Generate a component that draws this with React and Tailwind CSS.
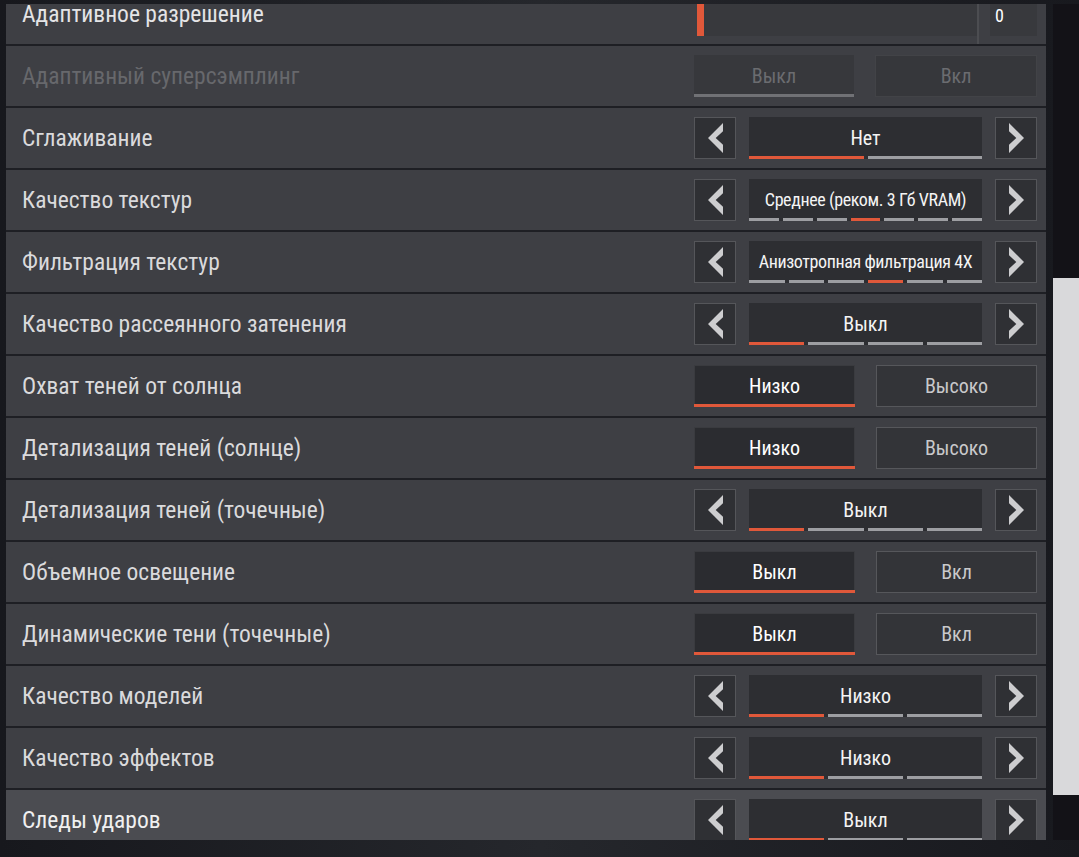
const rows = [
  { label: 'Адаптивное разрешение', type: 'slider', value: '0' },
  { label: 'Адаптивный суперсэмплинг', type: 'toggle', options: ['Выкл', 'Вкл'], disabled: true },
  { label: 'Сглаживание', type: 'cycle', value: 'Нет', segs: 2, active: 0 },
  { label: 'Качество текстур', type: 'cycle', value: 'Среднее (реком. 3 Гб VRAM)', segs: 7, active: 3 },
  { label: 'Фильтрация текстур', type: 'cycle', value: 'Анизотропная фильтрация 4X', segs: 6, active: 3 },
  { label: 'Качество рассеянного затенения', type: 'cycle', value: 'Выкл', segs: 4, active: 0 },
  { label: 'Охват теней от солнца', type: 'toggle', options: ['Низко', 'Высоко'] },
  { label: 'Детализация теней (солнце)', type: 'toggle', options: ['Низко', 'Высоко'] },
  { label: 'Детализация теней (точечные)', type: 'cycle', value: 'Выкл', segs: 4, active: 0 },
  { label: 'Объемное освещение', type: 'toggle', options: ['Выкл', 'Вкл'] },
  { label: 'Динамические тени (точечные)', type: 'toggle', options: ['Выкл', 'Вкл'] },
  { label: 'Качество моделей', type: 'cycle', value: 'Низко', segs: 3, active: 0 },
  { label: 'Качество эффектов', type: 'cycle', value: 'Низко', segs: 3, active: 0 },
  { label: 'Следы ударов', type: 'cycle', value: 'Выкл', segs: 3, active: 0, hover: true },
]

function Chevron({ right }) {
  return (
    <svg width="15" height="30" viewBox="0 0 15 30" className={right ? 'rotate-180' : ''}>
      <polygon points="15,0 15,8.3 7.7,15 15,21.7 15,30 0,15" fill="#cdcdcf" />
    </svg>
  )
}

function ArrowButton({ right }) {
  return (
    <div className="w-[42px] h-[42px] shrink-0 flex items-center justify-center bg-[#2f3034] border border-[#55565a]">
      <Chevron right={right} />
    </div>
  )
}

function Cycle({ row }) {
  const long = row.value.length > 12
  return (
    <div className="flex items-center gap-[13px] w-[343px]">
      <ArrowButton />
      <div className="flex-1 h-[42px] flex flex-col bg-[#2d2e32]">
        <div
          className={`flex-1 flex items-center justify-center pt-[2px] text-[#f4f4f4] ${
            long ? 'text-[18px] tracking-[-0.4px]' : 'text-[20px]'
          }`}
        >
          {row.value}
        </div>
        <div className="flex gap-[4px] h-[3px]">
          {Array.from({ length: row.segs }).map((_, i) => (
            <div key={i} className={i === row.active ? 'flex-1 bg-[#e0583a]' : 'flex-1 bg-[#9d9ea2]'} />
          ))}
        </div>
      </div>
      <ArrowButton right />
    </div>
  )
}

function Toggle({ row }) {
  const [a, b] = row.options
  if (row.disabled) {
    return (
      <div className="flex gap-[21px] w-[343px] text-[20px] text-[#6b6c70]">
        <div className="flex-1 h-[42px] flex flex-col bg-[#37383c]">
          <div className="flex-1 flex items-center justify-center pt-[2px]">{a}</div>
          <div className="h-[3px] bg-[#707175]" />
        </div>
        <div className="flex-1 h-[42px] flex items-center justify-center bg-[#36373b] border border-[#424347]">{b}</div>
      </div>
    )
  }
  return (
    <div className="flex gap-[21px] w-[343px] text-[20px]">
      <div className="flex-1 h-[42px] flex flex-col bg-[#2b2c30] border-x border-t border-[#3a3b3f]">
        <div className="flex-1 flex items-center justify-center pt-[2px] text-white">{a}</div>
        <div className="h-[3px] -mx-px bg-[#e0583a]" />
      </div>
      <div className="flex-1 h-[42px] flex items-center justify-center bg-[#333438] border border-[#56575b] text-[#c9c9cb]">{b}</div>
    </div>
  )
}

// first row is scrolled partly out of view, so only its lower part shows
function SliderRow({ row }) {
  return (
    <div className="h-[40px] shrink-0 flex items-start justify-between pl-[16px] pr-[9px] bg-[#3e3f44]">
      <span className="pt-[1px] text-[23.5px] leading-[18px] text-[#e4e4e6]">{row.label}</span>
      <div className="flex items-start self-stretch w-[343px]">
        <div className="ml-[3px] w-[280px] h-[32px] flex bg-[#38393d]">
          <div className="w-[7px] bg-[#e0583a]" />
        </div>
        <div className="w-[2px] self-stretch bg-[#4c4d51]" />
        <div className="ml-[11px] w-[47px] h-[32px] bg-[#38393d] pl-[5px] pt-[3px] text-[18px] text-white leading-none">
          {row.value}
        </div>
      </div>
    </div>
  )
}

function Row({ row }) {
  const labelColor = row.disabled ? 'text-[#67686c]' : row.hover ? 'text-[#f0f0f0]' : 'text-[#dadadc]'
  return (
    <div className={`h-[60px] shrink-0 flex items-center justify-between pl-[16px] pr-[9px] ${row.hover ? 'bg-[#4b4c51]' : 'bg-[#3e3f44]'}`}>
      <span className={`text-[23.5px] leading-[18px] ${labelColor}`}>{row.label}</span>
      {row.type === 'toggle' && <Toggle row={row} />}
      {row.type === 'cycle' && <Cycle row={row} />}
    </div>
  )
}

export default function App() {
  return (
    <div className="w-[1079px] h-[857px] flex items-start overflow-hidden bg-gradient-to-r from-[#17181d] via-[#25272c] to-[#18191e] font-['Roboto_Condensed','Roboto',sans-serif]">
      <div className="ml-[6px] mt-[4px] w-[1040px] h-[836px] overflow-hidden flex flex-col gap-[2px] bg-[#1e1f24]">
        {rows.map((row) =>
          row.type === 'slider' ? <SliderRow key={row.label} row={row} /> : <Row key={row.label} row={row} />
        )}
      </div>
      <div className="ml-[7px] mt-[4px] w-[26px] h-[836px] flex flex-col bg-[#131217]">
        <div className="mt-[274px] h-[517px] bg-[#d9d9db]" />
      </div>
    </div>
  )
}
